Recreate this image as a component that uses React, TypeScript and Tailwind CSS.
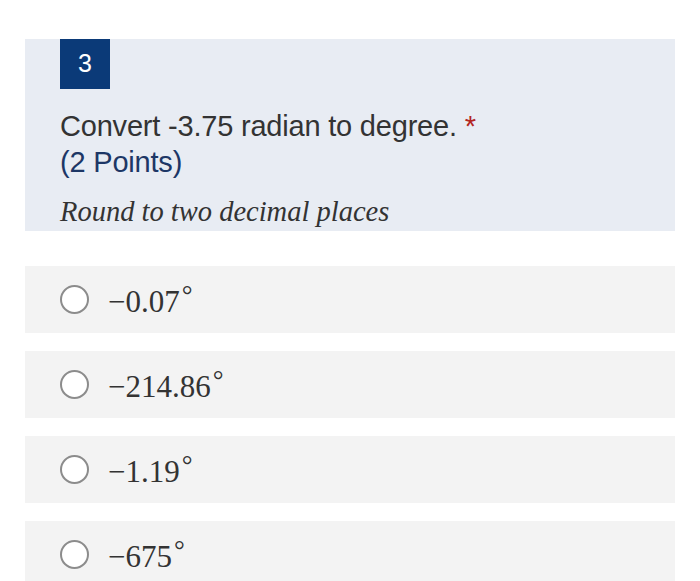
import React from 'react';

const options = ['−0.07', '−214.86', '−1.19', '−675'];

const Option: React.FC<{ label: string }> = ({ label }) => (
  <div className="flex items-center h-[67px] bg-[#f3f3f3] pl-[35px] gap-[19px]">
    <span className="w-[29px] h-[29px] rounded-full border-2 border-[#8c8c8c] bg-white shrink-0" />
    <span
      className="text-[31px] text-[#333] leading-none"
      style={{ fontFamily: '"Liberation Serif", serif' }}
    >
      {label}
      <span className="text-[27px] align-[8px] ml-[2px]">°</span>
    </span>
  </div>
);

export default function App() {
  return (
    <div className="w-[700px] h-[581px] bg-white overflow-hidden pt-[39px] px-[25px]">
      <div className="bg-[#e8ecf3] pl-[35px] h-[192px]" style={{ fontFamily: '"Liberation Sans", Arial, sans-serif' }}>
        <div className="w-[50px] h-[50px] bg-[#0b3a78] text-white text-[25px] flex items-center justify-center">
          3
        </div>
        <div className="mt-[19px] text-[29px] leading-[36px] text-[#333] tracking-[-0.2px]">
          Convert -3.75 radian to degree. <span className="text-[#b3261e]">*</span>
        </div>
        <div className="text-[29px] leading-[36px] text-[#1d3766] tracking-[-0.2px]">(2 Points)</div>
        <div
          className="mt-[17px] text-[28.5px] italic text-[#333] leading-[30px]"
          style={{ fontFamily: '"Liberation Serif", serif' }}
        >
          Round to two decimal places
        </div>
      </div>
      <div className="mt-[35px] flex flex-col gap-[18px]">
        {options.map(o => (
          <Option key={o} label={o} />
        ))}
      </div>
    </div>
  );
}
